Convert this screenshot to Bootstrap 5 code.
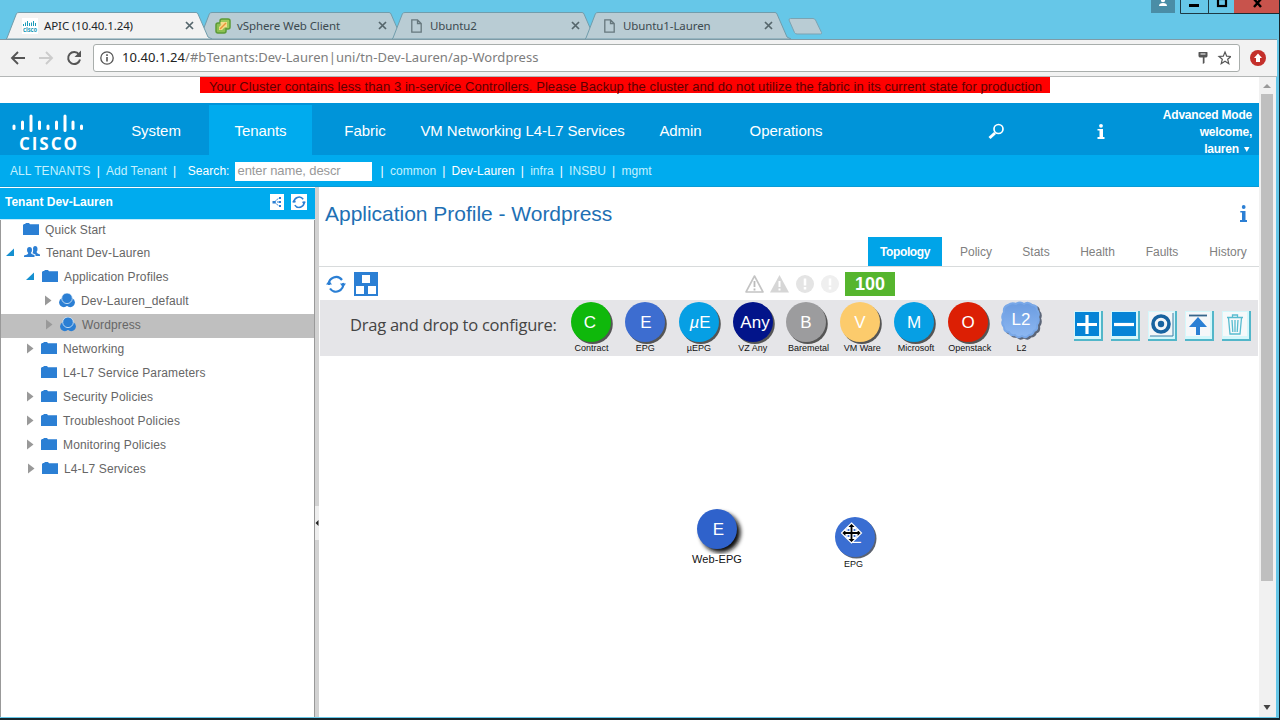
<!DOCTYPE html>
<html lang="en">

<head>
    <meta charset="UTF-8">
    <meta name="viewport" content="width=device-width, initial-scale=1">
    <title>APIC (10.40.1.24)</title>
    <link href="https://cdn.jsdelivr.net/npm/bootstrap@5.3.0/dist/css/bootstrap.min.css" rel="stylesheet">
    <style>
        body {
            width: 1280px;
            height: 720px;
            overflow: hidden;
            background: #66c7e8;
            font-family: "Liberation Sans", Arial, sans-serif;
            font-size: 12px;
            line-height: 1.2;
            color: #555;
        }

        svg { display: block; flex-shrink: 0; }

        .window { width: 1280px; height: 720px; border-right: 1px solid #14262d; }

        /* Browser tabs */
        .tab-strip { height: 39px; padding-left: 6px; font-family: "Noto Sans", "Open Sans", sans-serif; }
        .browser-tab { display: grid; width: 206px; height: 27px; margin-right: -13px; }
        .browser-tab > * { grid-area: 1 / 1; }
        .browser-tab.current { z-index: 2; }
        .tab-inner { padding: 0 18.5px 0 16px; color: #3c4a50; font-size: 11.5px; }
        .tab-inner .pic { width: 22px; }
        .tab-inner .tab-name { letter-spacing: -.1px; }
        .new-tab { margin-left: 10px; margin-bottom: 4px; }
        .win-user { width: 24px; height: 13px; background: #4a8da6; margin-right: 5px; }

        /* Address row */
        .address-row { height: 38px; background: #f2f2f2; border-top: 1px solid #7f9ba6; border-bottom: 1px solid #b4b7b7; width: 1277px; padding-left: 9px; }
        .address-box { width: 1147px; height: 28px; margin-left: 9px; background: #fff; border: 1px solid #a9aeac; border-radius: 3px; font-family: "Noto Sans", "Open Sans", sans-serif; font-size: 13px; letter-spacing: .05px; color: #7d7d7d; padding: 0 8px 0 6px; }
        .address-box b { font-weight: 400; color: #222; }
        .update-dot { margin-left: 10px; }

        /* Page */
        .page { width: 1259px; height: 640px; background: #fff; }
        .warning-bar { width: 850px; height: 16px; margin-left: 200px; background: #f00; color: #5c0000; font-size: 13px; letter-spacing: .08px; line-height: 19px; padding-left: 9px; white-space: nowrap; }
        .top-nav { display: grid; grid-template-columns: 103px 106px 103px 106px 209px 107px 104px 1fr; height: 52px; margin-top: 10px; background: #0094d9; color: #fff; font-size: 15px; white-space: nowrap; }
        .top-nav a { display: flex; align-items: center; justify-content: center; padding-top: 1px; color: #fff; text-decoration: none; letter-spacing: -.06px; }
        .top-nav a.active { background: #00abee; margin: 2px 0; }
        .logo-text { font-family: "Open Sans", sans-serif; font-weight: 700; font-size: 17px; fill: #fff; }
        .user-box { width: 110px; padding: 4px 7px 0 0; text-align: right; font-size: 12px; font-weight: 700; line-height: 17px; letter-spacing: -.22px; }
        .sub-nav { height: 32px; background: #00abee; color: #fff; padding: 1px 0 0 10px; border-bottom: 1px solid #0a9bd5; white-space: nowrap; }
        .sub-nav span { color: #c4f1ff; letter-spacing: .05px; }
        .sub-nav .on { color: #fff; }
        .sub-nav .sep { color: #fff; margin: 0 6.1px; }
        .sub-nav .find-label { margin-left: 5.5px; }
        .search-input { width: 137px; height: 19px; margin: 0 3px 0 5px; background: #fff; line-height: 18px; padding-left: 3px; }
        .sub-nav .search-input span { color: #999; font-size: 13px; letter-spacing: -.1px; }

        /* Tree */
        .side { width: 315px; border-left: 1px solid #999; border-right: 1px solid #999; }
        .side-head { height: 33px; margin: 0 -1px; background: #00abee; color: #fff; font-weight: 700; padding: 0 8px 3px 5px; border-top: 1px solid #fff; border-bottom: 1px solid #c5ecfa; }
        .tree-row { height: 24px; padding-bottom: 2px; color: #666; font-size: 12px; letter-spacing: .13px; }
        .tree-row.short { height: 23px; }
        .tree-row.picked { background: #bfbfbf; }
        .tree-row svg { margin-bottom: 1px; }
        .tree-row .item-name { margin-left: 6px; }
        .lv0 { padding-left: 4px; }
        .lv1 { padding-left: 5px; }
        .lv2 { padding-left: 22px; }
        .lv3 { padding-left: 40px; }
        .nudge { margin-left: 1px; }
        .splitter { width: 4px; background: #d2d2d2; padding-top: 319px; }

        /* Work area */
        .work-title { height: 50px; padding: 4px 12px 0 6px; color: #1e70b4; font-size: 21px; letter-spacing: -.02px; }
        .work-tabs { display: grid; grid-template-columns: 74px 68px 52px 71px 64px 62px; height: 29px; margin-left: 549px; text-align: center; line-height: 30px; color: #808080; }
        .work-tabs .active { background: #00a4e8; color: #fff; font-weight: 700; letter-spacing: -.4px; height: 29px; }
        .work-tabs .pe { padding-right: 6px; }
        .tool-row { height: 34px; border-top: 1px solid #d8dbdc; padding-left: 7px; }
        .score { width: 50px; height: 24px; background: #56b52e; color: #fff; font-weight: 700; font-size: 18px; text-align: center; line-height: 24px; margin-left: 5px; }
        .palette { height: 56px; margin: 0 1px; background: #e5e5e8; }
        .palette-text { width: 244.6px; padding-left: 30px; padding-bottom: 7px; font-family: "Open Sans", sans-serif; font-size: 16.5px; letter-spacing: -.24px; color: #444; white-space: nowrap; }
        .palette-item { width: 53.75px; text-align: center; color: #111; font-size: 9px; line-height: 9px; white-space: nowrap; }
        .palette-item svg { margin: 0 auto; }
        .palette-item .shift { padding-left: 4px; }
        .btn-set { gap: 7px; margin-left: 25px; margin-top: 10px; }
        .disc-letter { font-size: 17px; fill: #fff; text-anchor: middle; }
        .stage { position: relative; }
        .node { position: absolute; width: 70px; text-align: center; color: #111; }
        .node-web { left: 363px; top: 148px; font-size: 11px; line-height: 11px; letter-spacing: .1px; }
        .node-epg { left: 501px; top: 158px; font-size: 9px; line-height: 8px; }
        .node-epg span { padding-right: 3px; }
        .node svg { margin: 0 auto; }

        .scroll { width: 17px; height: 640px; background: #f1f1f1; padding: 0 3px 0 2px; }
        .scroll .thumb { height: 487px; background: #bfbfbf; }
        .desk-edge { height: 2px; background: #17252b; }
    </style>
</head>

<body>
    <div class="window d-flex flex-column">
        <!-- Shared shapes -->
        <svg width="0" height="0" class="position-absolute">
            <symbol id="tabShape" viewBox="0 0 206 27"><path d="M0 27 L1 26 L10.500 1.500 Q11.500 .5 13 .5 H190 Q191.500 .5 192 2 L202 25 L206 27Z" stroke="#719dac" /></symbol>
            <symbol id="cross" viewBox="0 0 9 9"><path d="M1 1 L8 8 M8 1 L1 8" stroke="#55666c" stroke-width="1.700" /></symbol>
            <symbol id="sheet" viewBox="0 0 11 14"><path d="M.8 .8 H6.500 L10.200 4.500 V13.200 H.8Z M6.500 .8 V4.500 H10.200" fill="none" stroke="#66777d" stroke-width="1.300" /></symbol>
            <symbol id="folder" viewBox="0 0 16 14"><path d="M0 2 L1 1 H2 L3 0 H6 L7 1.300 H16 V12 H0Z" fill="#2b7fd4" /></symbol>
            <symbol id="closed" viewBox="0 0 18 12"><path d="M4 .5 L10.500 5.500 L4 10.500Z" fill="#999" /></symbol>
            <symbol id="trio" viewBox="0 0 16 15"><circle cx="4.800" cy="9.500" r="4.700" fill="#2b7fd4" /><circle cx="11.200" cy="9.500" r="4.700" fill="#2b7fd4" /><circle cx="8" cy="5.300" r="5.300" fill="#2b7fd4" stroke="#dcebf8" stroke-width=".8" /></symbol>
            <symbol id="refresh" viewBox="0 0 20 18"><path d="M3 10 A7.200 7.200 0 0 1 16 5 M17 8 A7.200 7.200 0 0 1 4 13.500" fill="none" stroke="currentColor" stroke-width="2.200" /><path d="M0 9.500 L3 5.500 L6 9.500Z M14 8.500 H20 L17 12.500Z" fill="currentColor" /></symbol>
            <symbol id="cloudShape" viewBox="-22 -22 44 44"><path d="M-13 -17 Q-9 -20 -5 -18 Q-1 -21 3 -18 Q7 -21 11 -17 Q16 -17 16 -12 Q19 -9 17 -5 Q19 -1 16 3 Q17 8 13 9 Q12 13 8 13 Q5 17 1 14 Q-3 17 -6 13 Q-11 14 -12 10 Q-17 10 -17 5 Q-20 2 -18 -2 Q-20 -6 -17 -10 Q-18 -15 -13 -17Z" stroke-width="2" stroke-linejoin="round" /></symbol>
        </svg>

        <div class="tab-strip d-flex align-items-end">
            <div class="browser-tab current">
                <svg width="206" height="27" fill="#f2f2f2"><use href="#tabShape" /></svg>
                <div class="tab-inner d-flex align-items-center">
                    <span class="pic"><svg width="16" height="16" viewBox="0 0 16 16"><rect width="16" height="16" fill="#fff" /><path d="M1.500 6v2 M3.500 4.500v3.500 M5.500 3v5 M7.500 5v3 M9.500 4.500v3.500 M11.500 3v5 M13.500 5v3" stroke="#1a9ab8" /><text x="1" y="14" font-size="6.500" font-weight="700" textLength="14" lengthAdjust="spacingAndGlyphs" fill="#1a9ab8">cisco</text></svg></span>
                    <span class="tab-name text-dark">APIC (10.40.1.24)</span>
                    <svg class="ms-auto" width="9" height="9"><use href="#cross" /></svg>
                </div>
            </div>
            <div class="browser-tab">
                <svg width="206" height="27" fill="#b9ccd4"><use href="#tabShape" /></svg>
                <div class="tab-inner d-flex align-items-center">
                    <span class="pic"><svg width="16" height="16" viewBox="0 0 16 16"><rect x="5" y="1" width="10" height="10" rx="2" fill="#9bc95a" stroke="#5b9a37" stroke-width="1.500" /><rect x="1" y="5" width="10" height="10" rx="2" fill="#8cc152" stroke="#5b9a37" stroke-width="1.500" /><path d="M4 12 V9 L6.500 6.500 H5.500 V4 H12 V9.500 H9.500 L7 12Z" fill="#f5dc8b" /><path d="M5 11 L11 5" stroke="#e9953a" stroke-width="1.500" /></svg></span>
                    <span class="tab-name">vSphere Web Client</span>
                    <svg class="ms-auto" width="9" height="9"><use href="#cross" /></svg>
                </div>
            </div>
            <div class="browser-tab">
                <svg width="206" height="27" fill="#b9ccd4"><use href="#tabShape" /></svg>
                <div class="tab-inner d-flex align-items-center">
                    <span class="pic"><svg class="ms-auto me-2" width="11" height="14"><use href="#sheet" /></svg></span>
                    <span class="tab-name">Ubuntu2</span>
                    <svg class="ms-auto" width="9" height="9"><use href="#cross" /></svg>
                </div>
            </div>
            <div class="browser-tab">
                <svg width="206" height="27" fill="#b9ccd4"><use href="#tabShape" /></svg>
                <div class="tab-inner d-flex align-items-center">
                    <span class="pic"><svg class="ms-auto me-2" width="11" height="14"><use href="#sheet" /></svg></span>
                    <span class="tab-name">Ubuntu1-Lauren</span>
                    <svg class="ms-auto" width="9" height="9"><use href="#cross" /></svg>
                </div>
            </div>
            <svg class="new-tab" width="35" height="17" viewBox="0 0 35 17"><path d="M1 2 Q1 .5 2.500 .5 H25 Q26.500 .5 27.500 2 L33.500 14.500 Q34 16 32.500 16 H9 Q7.500 16 6.500 14.500Z" fill="#b9ccd4" stroke="#7ba3b2" /></svg>
            <div class="win-user ms-auto align-self-start"><svg width="24" height="13"><circle cx="12" cy="0" r="2.200" fill="#fff" /><path d="M8 6 Q8 3 12 3 T16 6Z" fill="#fff" /></svg></div>
            <svg class="align-self-start" width="99" height="14" viewBox="0 0 99 14"><path d="M.5 -1 V13.500 H54 M28.500 0 V13" fill="none" stroke="#1d3944" /><rect x="54" width="45" height="13" fill="#c8534c" /><path d="M54 13.500 H99" stroke="#1d2a30" /><path d="M9 5.500 H19" stroke="#000" stroke-width="3" /><rect x="38" y="-1" width="8" height="7" fill="none" stroke="#000" stroke-width="2.200" /><path d="M74 -1 L81 7 M81 -1 L74 7" stroke="#000" stroke-width="2.400" /></svg>
        </div>

        <div class="address-row d-flex align-items-center">
            <svg width="75" height="20" viewBox="0 0 75 20"><path d="M16 10 H3 M9 4 L3 10 L9 16" fill="none" stroke="#555" stroke-width="1.900" /><path d="M30 10 H43 M37 4 L43 10 L37 16" fill="none" stroke="#ccc" stroke-width="1.900" /><path d="M70 6.500 A6 6 0 1 0 71 11.500" fill="none" stroke="#555" stroke-width="2" /><path d="M72 2.500 V9 H65.500Z" fill="#555" /></svg>
            <div class="address-box d-flex align-items-center">
                <svg class="me-2" width="14" height="14" viewBox="0 0 14 14"><circle cx="7" cy="7" r="6.200" fill="none" stroke="#555" stroke-width="1.300" /><path d="M7 6 V10.500 M7 3.300 V4.900" stroke="#555" stroke-width="1.600" /></svg>
                <span class="url"><b>10.40.1.24</b>/#bTenants:Dev-Lauren|uni/tn-Dev-Lauren/ap-Wordpress</span>
                <svg class="ms-auto" width="34" height="16" viewBox="0 0 34 16"><path d="M1.500 2.500 Q1.500 2 2 2 H10 Q10.500 2 10.500 2.500 V6 Q10.500 7.500 8.500 7.500 H7.500 V13 L5.800 14 V7.500 H3.500 Q1.500 7.500 1.500 6Z" fill="#555" /><path d="M3.500 4h5" stroke="#fff" /><path d="M28 2 L29.700 6.200 L33.800 6.500 L30.700 9.300 L31.800 13.700 L28 11.300 L24.200 13.700 L25.300 9.300 L22 6.500 L26.300 6.200Z" fill="none" stroke="#555" stroke-width="1.200" /></svg>
            </div>
            <svg class="update-dot" width="16" height="16" viewBox="0 0 16 16"><circle cx="8" cy="8" r="8" fill="#c4302b" /><path d="M8 3.500 L12 8 H10 V12 H6 V8 H4Z" fill="#fff" /></svg>
        </div>

        <div class="d-flex">
            <div class="page d-flex flex-column">
                <div class="warning-bar">Your Cluster contains less than 3 in-service Controllers. Please Backup the cluster and do not utilize the fabric in its current state for production</div>

                <nav class="top-nav">
                    <svg width="103" height="52" viewBox="0 0 103 52"><path d="M14 23v2.500 M22.500 19v6.500 M31 13v14.500 M39.500 19v6.500 M48 23v2.500 M56.500 19v6.500 M65 13v14.500 M73 19v6.500 M81.500 23v2.500" stroke="#fff" stroke-width="3" stroke-linecap="round" /><text class="logo-text" x="19" y="46.500" textLength="58" lengthAdjust="spacing">CISCO</text></svg>
                    <a href="#">System</a>
                    <a href="#" class="active">Tenants</a>
                    <a href="#">Fabric</a>
                    <a href="#">VM Networking L4-L7 Services</a>
                    <a href="#">Admin</a>
                    <a href="#">Operations</a>
                    <div class="d-flex align-items-center">
                        <svg width="170" height="52" viewBox="0 0 170 52"><circle cx="160.500" cy="24" r="4.500" fill="none" stroke="#fff" stroke-width="1.700" /><path d="M157 28 L151.500 33" stroke="#fff" stroke-width="3" /></svg>
                        <svg width="100" height="52" viewBox="0 0 100 52"><circle cx="93" cy="20.800" r="1.900" fill="#fff" /><path d="M89.500 24 H95 V32 H96.500 V34 H89.500 V32 H91.500 V25.500 H89.500Z" fill="#fff" /></svg>
                        <div class="user-box ms-auto">Advanced Mode<br>welcome,<br>lauren <svg class="d-inline-block" width="10" height="7" viewBox="0 0 10 7"><path d="M2 1 H7.500 L4.800 6Z" fill="#fff" /></svg></div>
                    </div>
                </nav>

                <div class="sub-nav d-flex align-items-center">
                    <span>ALL TENANTS</span><span class="sep">|</span><span>Add Tenant</span><span class="sep">|</span>
                    <span class="on find-label">Search:</span>
                    <div class="search-input"><span>enter name, descr</span></div>
                    <span class="sep">|</span><span>common</span><span class="sep">|</span><span class="on">Dev-Lauren</span><span class="sep">|</span><span>infra</span><span class="sep">|</span><span>INSBU</span><span class="sep">|</span><span>mgmt</span>
                </div>

                <div class="d-flex flex-grow-1">
                    <aside class="side">
                        <div class="side-head d-flex align-items-center">
                            <span>Tenant Dev-Lauren</span>
                            <svg class="ms-auto" width="14" height="16" viewBox="0 0 14 16"><rect width="14" height="16" fill="#fff" /><path d="M4 8 L9 4 M4 8 H10 M4 8 L9 12" stroke="#2b7fd4" stroke-dasharray="2 1" /><path d="M2.500 7h3v2.500h-3z M9 3h2v2h-2z M9 7h2v2h-2z M9 11h2v2h-2z" fill="#2b7fd4" /></svg>
                            <svg width="23" height="16" viewBox="-7 0 23 16"><rect width="16" height="16" fill="#fff" /><use href="#refresh" x="1" y="1.500" width="14" height="13" color="#2b7fd4" /></svg>
                        </div>
                        <div class="tree-row short lv0 d-flex align-items-center"><svg width="18" height="12"></svg><svg width="16" height="14"><use href="#folder" /></svg><span class="item-name">Quick Start</span></div>
                        <div class="tree-row short lv1 d-flex align-items-center"><svg width="18" height="12"><path d="M0 9 H8 V1.500Z" fill="#1590d0" /></svg><svg width="16" height="14" viewBox="0 0 16 14"><path d="M5.500 1 Q8 1 8 4 Q8 6 6.800 7 Q7.500 8.500 10.500 9 V11 H0 V9.500 Q4.200 8.500 4.200 7 Q3 6 3 4 Q3 1 5.500 1Z M11 0 Q13.500 0 13.500 3 Q13.500 5 12.500 6 Q13 7.500 16 8.500 V10 H11.500 V8.500 L8.500 7.300 Q9.500 5 9 2 Q9.500 0 11 0Z" fill="#2b7fd4" /></svg><span class="item-name">Tenant Dev-Lauren</span></div>
                        <div class="tree-row lv2 d-flex align-items-center"><svg width="19" height="12"><path d="M3 9 H11 V1.500Z" fill="#1590d0" /></svg><svg width="16" height="14"><use href="#folder" /></svg><span class="item-name">Application Profiles</span></div>
                        <div class="tree-row lv3 d-flex align-items-center"><svg width="18" height="12"><use href="#closed" /></svg><svg width="16" height="15"><use href="#trio" /></svg><span class="item-name">Dev-Lauren_default</span></div>
                        <div class="tree-row picked lv3 d-flex align-items-center"><svg class="nudge" width="18" height="12"><use href="#closed" /></svg><svg width="16" height="15"><use href="#trio" /></svg><span class="item-name">Wordpress</span></div>
                        <div class="tree-row lv2 d-flex align-items-center"><svg width="18" height="12"><use href="#closed" /></svg><svg width="16" height="14"><use href="#folder" /></svg><span class="item-name">Networking</span></div>
                        <div class="tree-row lv2 d-flex align-items-center"><svg width="18" height="12"></svg><svg width="16" height="14"><use href="#folder" /></svg><span class="item-name">L4-L7 Service Parameters</span></div>
                        <div class="tree-row lv2 d-flex align-items-center"><svg width="18" height="12"><use href="#closed" /></svg><svg width="16" height="14"><use href="#folder" /></svg><span class="item-name">Security Policies</span></div>
                        <div class="tree-row lv2 d-flex align-items-center"><svg width="18" height="12"><use href="#closed" /></svg><svg width="16" height="14"><use href="#folder" /></svg><span class="item-name">Troubleshoot Policies</span></div>
                        <div class="tree-row lv2 d-flex align-items-center"><svg width="18" height="12"><use href="#closed" /></svg><svg width="16" height="14"><use href="#folder" /></svg><span class="item-name">Monitoring Policies</span></div>
                        <div class="tree-row lv2 d-flex align-items-center"><svg class="nudge" width="18" height="12"><use href="#closed" /></svg><svg width="16" height="14"><use href="#folder" /></svg><span class="item-name">L4-L7 Services</span></div>
                    </aside>
                    <div class="splitter"><svg width="4" height="34" viewBox="0 0 4 34"><rect width="4" height="34" fill="#eee" /><path d="M3.500 14 V20 L.5 17Z" fill="#222" /></svg></div>

                    <main class="flex-grow-1 d-flex flex-column">
                        <div class="work-title d-flex align-items-center">
                            <span>Application Profile - Wordpress</span>
                            <svg class="ms-auto" width="7" height="18" viewBox="0 0 7 18"><circle cx="3.700" cy="2" r="1.900" fill="#2b7fd4" /><path d="M.3 6 H5.500 V15 H7 V17 H0 V15 H2 V7.500 H.3Z" fill="#2b7fd4" /></svg>
                        </div>
                        <div class="work-tabs">
                            <span class="active">Topology</span><span>Policy</span><span>Stats</span><span>Health</span><span class="pe">Faults</span><span>History</span>
                        </div>
                        <div class="tool-row d-flex align-items-center">
                            <svg width="20" height="18" color="#2b7fd4"><use href="#refresh" /></svg>
                            <svg class="ms-2" width="24" height="24" viewBox="0 0 24 24"><rect width="24" height="24" fill="#2b7fd4" /><path d="M8 3h8v8H8z M2 14h8v8H2z M14 14h8v8h-8z" fill="#fff" /></svg>
                            <svg width="462" height="20" viewBox="378 0 462 20"><path d="M754.500 2 L763 18 H746Z" fill="none" stroke="#c4c4c4" stroke-width="1.600" stroke-linejoin="round" /><path d="M754.500 7v6 M754.500 14.500v2" stroke="#bbb" stroke-width="1.800" /><path d="M779.500 1 L789 18.500 H770Z" fill="#d6d6d6" /><path d="M779.500 7v6 M779.500 14.500v2" stroke="#fff" stroke-width="2" /><circle cx="805" cy="10" r="9" fill="#e4e4e4" /><path d="M805 4.500v7 M805 13v2.500" stroke="#fff" stroke-width="2.500" /><circle cx="830" cy="10" r="9" fill="#efefef" /><path d="M830 4.500v7 M830 13v2.500" stroke="#fff" stroke-width="2.500" /></svg>
                            <div class="score">100</div>
                        </div>
                        <div class="palette d-flex">
                            <div class="palette-text align-self-center">Drag and drop to configure:</div>
                            <div class="palette-item"><svg width="48" height="44" viewBox="-24 -22 48 44"><circle cx="1.800" cy="2" r="20" fill="#555" /><circle r="20" fill="#0fb80b" /><text class="disc-letter" x="-1" y="6">C</text></svg><span>Contract</span></div>
                            <div class="palette-item"><svg width="48" height="44" viewBox="-24 -22 48 44"><circle cx="1.800" cy="2" r="20" fill="#555" /><circle r="20" fill="#3d6dd0" /><text class="disc-letter" x="1" y="6">E</text></svg><span>EPG</span></div>
                            <div class="palette-item"><svg width="48" height="44" viewBox="-24 -22 48 44"><circle cx="1.800" cy="2" r="20" fill="#555" /><circle r="20" fill="#069fe4" /><text class="disc-letter" x="1" y="6"><tspan font-style="italic">µ</tspan>E</text></svg><span>µEPG</span></div>
                            <div class="palette-item"><svg width="48" height="44" viewBox="-24 -22 48 44"><circle cx="1.800" cy="2" r="20" fill="#555" /><circle r="20" fill="#02148a" /><text class="disc-letter" x="2" y="6">Any</text></svg><span>VZ Any</span></div>
                            <div class="palette-item"><svg width="48" height="44" viewBox="-24 -22 48 44"><circle cx="1.800" cy="2" r="20" fill="#555" /><circle r="20" fill="#9c9c9e" /><text class="disc-letter" y="6">B</text></svg><span class="shift">Baremetal</span></div>
                            <div class="palette-item"><svg width="48" height="44" viewBox="-24 -22 48 44"><circle cx="1.800" cy="2" r="20" fill="#555" /><circle r="20" fill="#fccb6c" /><text class="disc-letter" y="6">V</text></svg><span class="shift">VM Ware</span></div>
                            <div class="palette-item"><svg width="48" height="44" viewBox="-24 -22 48 44"><circle cx="1.800" cy="2" r="20" fill="#555" /><circle r="20" fill="#069fe4" /><text class="disc-letter" y="6">M</text></svg><span class="shift">Microsoft</span></div>
                            <div class="palette-item"><svg width="48" height="44" viewBox="-24 -22 48 44"><circle cx="1.800" cy="2" r="20" fill="#555" /><circle r="20" fill="#dc1f04" /><text class="disc-letter" y="6">O</text></svg><span class="shift">Openstack</span></div>
                            <div class="palette-item"><svg width="48" height="44" viewBox="-24 -22 48 44"><defs><linearGradient id="cloudFill" x2="0" y2="1"><stop offset="0" stop-color="#6a9be0" /><stop offset="1" stop-color="#8db8f2" /></linearGradient></defs><use href="#cloudShape" x="-20" y="-20.500" width="44" height="44" fill="#5c6678" stroke="#5c6678" /><use href="#cloudShape" x="-22" y="-22" width="44" height="44" fill="url(#cloudFill)" stroke="#79a8e8" /><text class="disc-letter" y="3">L2</text></svg><span>L2</span></div>
                            <div class="btn-set d-flex">
                                <svg width="30" height="31" viewBox="0 0 30 31"><path d="M1 1 H30 V31 H1Z" fill="#52b6c9" /><path d="M1 1 H28 V29 H1Z" fill="#d5f7fb" /><rect x="2" y="2" width="24" height="24" fill="#0584d6" /><path d="M4 14.500 H24 M14 5 V24" stroke="#fff" stroke-width="3.200" /></svg>
                                <svg width="30" height="31" viewBox="0 0 30 31"><path d="M1 1 H30 V31 H1Z" fill="#52b6c9" /><path d="M1 1 H28 V29 H1Z" fill="#d5f7fb" /><rect x="2" y="2" width="24" height="24" fill="#0584d6" /><path d="M4 14.500 H24" stroke="#fff" stroke-width="3.200" /></svg>
                                <svg width="30" height="31" viewBox="0 0 30 31"><path d="M1 1 H30 V31 H1Z" fill="#52b6c9" /><path d="M1 1 H28 V29 H1Z" fill="#d5f7fb" /><rect x="2" y="2" width="24" height="24" fill="#f3f6f8" /><path d="M26 3V26H3" fill="none" stroke="#3b7da5" /><circle cx="14" cy="14" r="8" fill="none" stroke="#1763a0" stroke-width="3.600" /><circle cx="14" cy="14" r="3.200" fill="#1763a0" /></svg>
                                <svg width="30" height="31" viewBox="0 0 30 31"><path d="M1 1 H30 V31 H1Z" fill="#52b6c9" /><path d="M1 1 H28 V29 H1Z" fill="#d5f7fb" /><rect x="2" y="2" width="24" height="24" fill="#f6f7f9" /><path d="M5 5.500 H23" stroke="#38668c" stroke-width="1.800" /><path d="M14 7 L23 17 H16 V25 H12 V17 H5Z" fill="#2b7fd4" /></svg>
                                <svg width="30" height="31" viewBox="0 0 30 31"><path d="M1 1 H30 V31 H1Z" fill="#52b6c9" /><path d="M1 1 H28 V29 H1Z" fill="#d5f7fb" /><rect x="2" y="2" width="24" height="24" fill="#f6f9fa" /><path d="M6 7.500 H22 M11.500 7 V5 H16.500 V7 M7.500 8 L9 24 H19 L20.500 8 M11 10 L11.800 22 M14 10 V22 M17 10 L16.200 22" fill="none" stroke="#58bcd0" stroke-width="1.300" /></svg>
                            </div>
                        </div>
                        <div class="stage flex-grow-1">
                            <div class="node node-web"><svg width="60" height="50" viewBox="-30 -25 60 50"><defs><filter id="soft" x="-30%" y="-30%" width="160%" height="160%"><feGaussianBlur stdDeviation="2" /></filter></defs><circle cx="3.500" cy="3.500" r="20" fill="#111" filter="url(#soft)" /><circle r="20" fill="#2f62cb" /><text class="disc-letter" x="1.500" y="6">E</text></svg><span>Web-EPG</span></div>
                            <div class="node node-epg"><svg width="50" height="46" viewBox="-25 -23 50 46"><circle cx="1.500" cy="1.500" r="20" fill="#5b6270" /><circle r="20" fill="#3a6ed2" /><text class="disc-letter" x="1" y="6">E</text>
                                <!-- move cursor -->
                                <g transform="translate(-3.500 -4)"><path d="M-8 -9 H11 V8.300 H-8Z" fill="#3a6ed2" /><path d="M-4.500 -4.500h9v9h-9z" fill="#3a6ed2" stroke="#fff" stroke-width="1.200" /><path d="M0 -10 L4.500 -5.500 H1.500 V-1.500 H5.500 V-4.500 L10 0 L5.500 4.500 V1.500 H1.500 V5.500 H4.500 L0 10 L-4.500 5.500 H-1.500 V1.500 H-5.500 V4.500 L-10 0 L-5.500 -4.500 V-1.500 H-1.500 V-5.500 H-4.500Z" fill="#000" stroke="#fff" stroke-width="1.200" /></g></svg><span>EPG</span></div>
                        </div>
                    </main>
                </div>
            </div>
            <div class="scroll">
                <svg width="12" height="17" viewBox="0 0 12 17"><path d="M2 11 H10 L6 7Z" fill="#999" /></svg>
                <div class="thumb"></div>
                <svg width="12" height="136" viewBox="0 0 12 136"><path d="M2.500 124 H9.500 L6 129Z" fill="#444" /></svg>
            </div>
        </div>
        <div class="desk-edge mt-auto"></div>
    </div>
    <script src="https://cdn.jsdelivr.net/npm/bootstrap@5.3.0/dist/js/bootstrap.bundle.min.js"></script>
</body>

</html>
